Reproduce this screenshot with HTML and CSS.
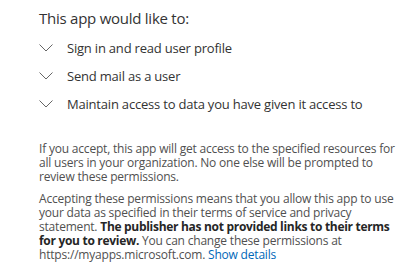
FILE: index.html
```html
<!DOCTYPE html>
<html>
<head>
<meta charset="utf-8">
<link rel="stylesheet" href="styles.css">
</head>
<body>
<div class="panel">
  <h2 class="title">This app would like to:</h2>
  <ul class="perms">
    <li class="perm"><svg class="chev" width="14" height="8" viewBox="0 0 14 8"><path d="M0.5 0.5 L7 7 L13.5 0.5" fill="none" stroke="#666" stroke-width="1"/></svg><span>Sign in and read user profile</span></li>
    <li class="perm"><svg class="chev" width="14" height="8" viewBox="0 0 14 8"><path d="M0.5 0.5 L7 7 L13.5 0.5" fill="none" stroke="#666" stroke-width="1"/></svg><span>Send mail as a user</span></li>
    <li class="perm"><svg class="chev" width="14" height="8" viewBox="0 0 14 8"><path d="M0.5 0.5 L7 7 L13.5 0.5" fill="none" stroke="#666" stroke-width="1"/></svg><span>Maintain access to data you have given it access to</span></li>
  </ul>
  <p class="note">If you accept, this app will get access to the specified resources for all users in your organization. No one else will be prompted to review these permissions.</p>
  <p class="note">Accepting these permissions means that you allow this app to use your data as specified in their terms of service and privacy statement. <b>The publisher has not provided links to their terms for you to review.</b> You can change these permissions at https://myapps.microsoft.com. <a class="link" href="#">Show details</a></p>
</div>
</body>
</html>
```
FILE: styles.css
```css
html, body {
  margin: 0;
  padding: 0;
  background: #fff;
}
body {
  font-family: "Open Sans", "Noto Sans", sans-serif;
  color: #444;
}
.panel {
  width: 362px;
  padding: 8px 0 0 39px;
}
.title {
  margin: 0;
  font-size: 15px;
  font-weight: 400;
  line-height: 20px;
  letter-spacing: -0.25px;
  color: #333;
}
.perms {
  list-style: none;
  margin: 11px 0 0 0;
  padding: 0;
  display: flex;
  flex-direction: column;
  gap: 10px;
}
.perm {
  display: flex;
  align-items: center;
  height: 18px;
  font-size: 13px;
  letter-spacing: -0.2px;
  color: #333;
}
.chev {
  width: 14px;
  height: 8px;
  margin-right: 14px;
  flex: none;
}
.note {
  margin: 29px 0 0 0;
  font-size: 12px;
  line-height: 14px;
  letter-spacing: -0.2px;
  color: #505050;
}
.note + .note {
  margin-top: 8px;
}
.note b {
  font-weight: 700;
  letter-spacing: -0.3px;
  color: #262626;
}
.link {
  color: #0067b8;
  text-decoration: none;
}
```
